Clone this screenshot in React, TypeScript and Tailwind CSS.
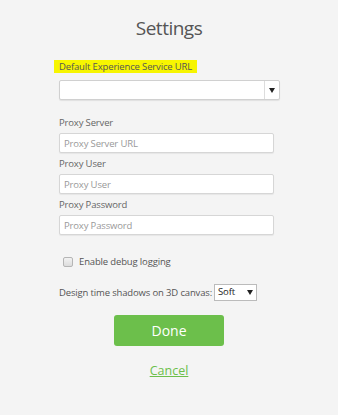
import React from "react";

const font = { fontFamily: '"Open Sans", "Noto Sans", sans-serif' };

function Field({ label, placeholder }: { label: string; placeholder: string }) {
  return (
    <div className="flex flex-col">
      <div className="text-[9.5px] tracking-[-0.15px] leading-[14px] text-[#666] h-[21px] flex items-center">{label}</div>
      <input
        className="w-[215px] h-[20px] bg-white border border-[#d6d6d6] rounded-[2px] px-[4px] text-[9.5px] tracking-[-0.15px] text-[#555] placeholder:text-[#999] outline-none shadow-[0_1px_1px_rgba(0,0,0,0.06)]"
        placeholder={placeholder}
      />
    </div>
  );
}

export default function App() {
  return (
    <div className="w-[338px] h-[415px] bg-[#f4f4f4] flex flex-col items-center" style={font}>
      <div className="mt-[15px] text-[19px] tracking-[-0.5px] leading-[26px] text-[#555]">Settings</div>
      <div className="w-[221px] ml-[1px] mt-[19px] flex flex-col">
        <div className="self-start -ml-[5px] px-[5px] bg-[#f7f500] text-[9.5px] tracking-[-0.15px] leading-[13px] text-[#555]">
          Default Experience Service URL
        </div>
        <div className="mt-[7px] h-[20px] w-[221px] bg-white border border-[#d0d0d0] rounded-[2px] flex justify-end shadow-[0_1px_1px_rgba(0,0,0,0.08)]">
          <div className="w-[15px] h-full border-l border-[#ddd] flex items-center justify-center">
            <svg width="6" height="5" viewBox="0 0 6 5"><path d="M0 0h6L3 5z" fill="#222" /></svg>
          </div>
        </div>
        <div className="mt-[12px] flex flex-col">
          <Field label="Proxy Server" placeholder="Proxy Server URL" />
          <Field label="Proxy User" placeholder="Proxy User" />
          <Field label="Proxy Password" placeholder="Proxy Password" />
        </div>
        <div className="mt-[20px] ml-[4px] flex items-center gap-[6px]">
          <div className="w-[10px] h-[10px] border border-[#b5b5b5] rounded-[2px] bg-gradient-to-b from-[#f2f2f2] to-[#dcdcdc]" />
          <span className="text-[9.5px] tracking-[-0.15px] leading-[14px] text-[#555]">Enable debug logging</span>
        </div>
        <div className="mt-[15px] flex items-center gap-[2px]">
          <span className="text-[9.5px] tracking-[-0.15px] leading-[14px] text-[#555]">Design time shadows on 3D canvas:</span>
          <div className="w-[43px] h-[17px] bg-white border border-[#bbb] flex items-center justify-between px-[3px]">
            <span className="text-[9.5px] tracking-[-0.15px] text-[#222]">Soft</span>
            <svg width="6" height="5" viewBox="0 0 6 5"><path d="M0 0h6L3 5z" fill="#222" /></svg>
          </div>
        </div>
      </div>
      <button className="mt-[14px] w-[110px] h-[31px] rounded-[3px] bg-[#6cbf4b] text-white text-[14px]">Done</button>
      <a className="mt-[16px] text-[12.5px] leading-[18px] text-[#6cbf4b] underline">Cancel</a>
    </div>
  );
}
